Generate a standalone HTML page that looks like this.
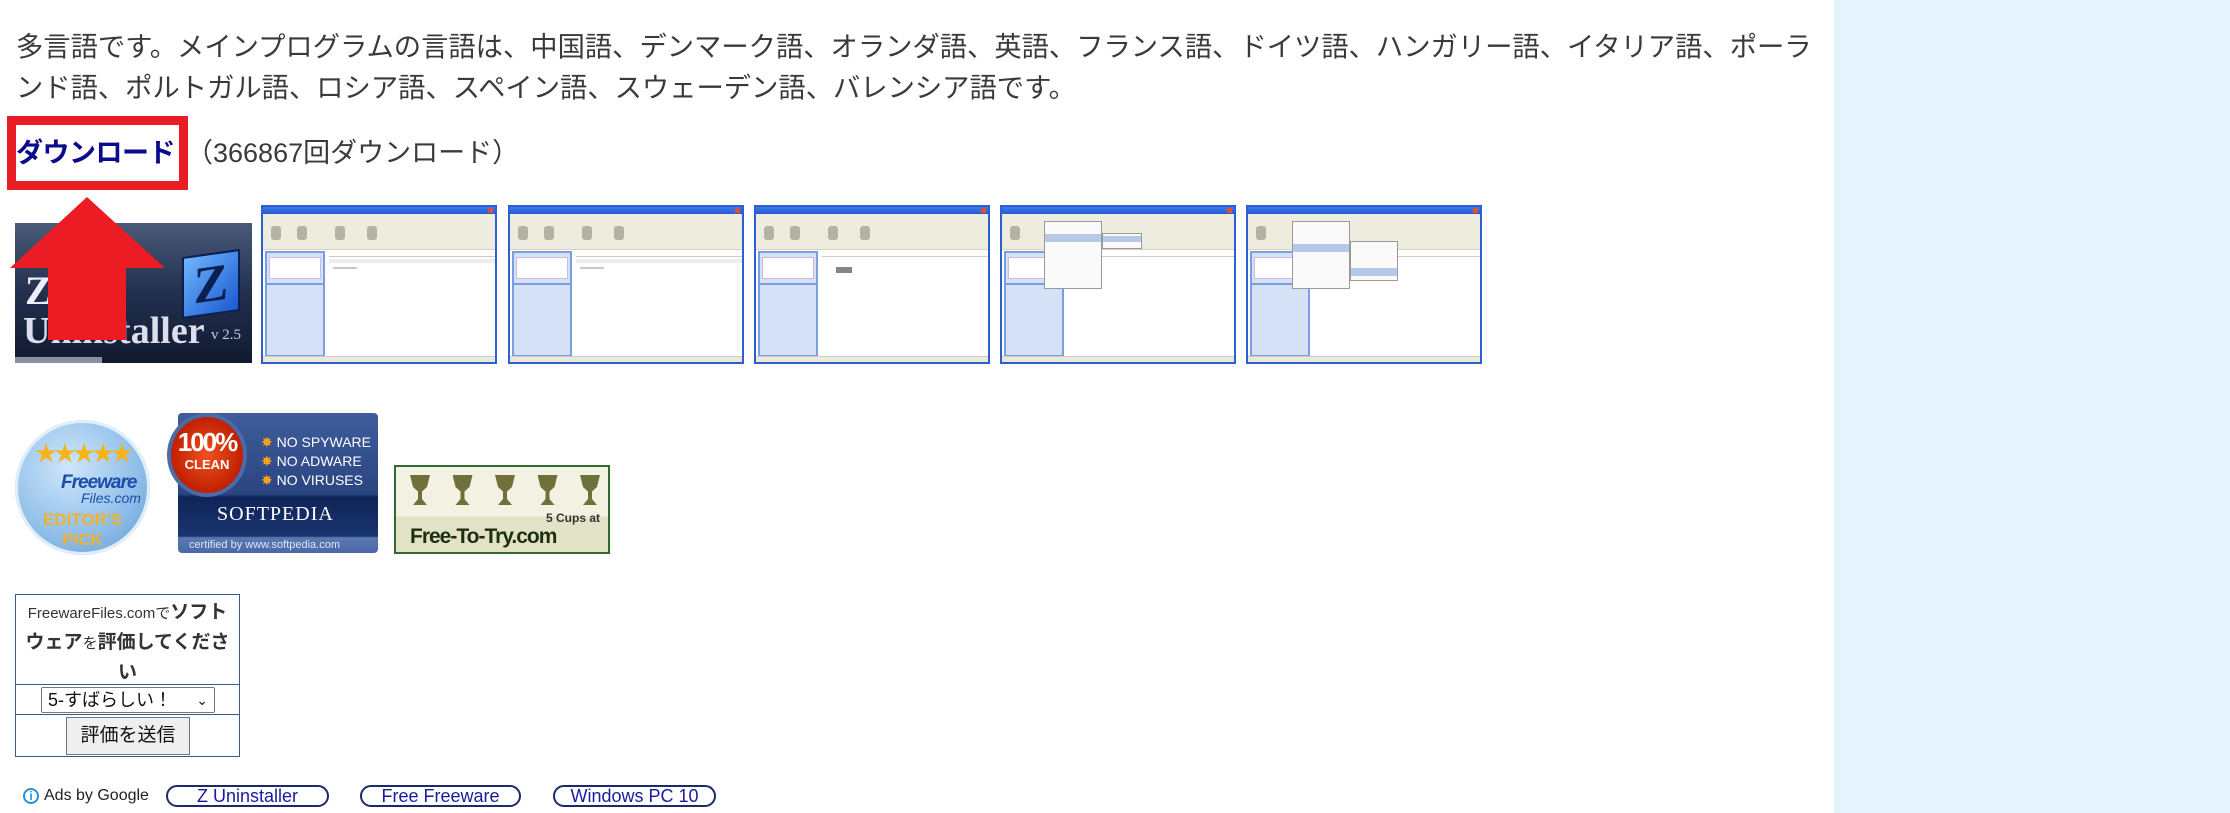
<!DOCTYPE html>
<html><head><meta charset="utf-8">
<style>
*{margin:0;padding:0;box-sizing:border-box}
body{width:2230px;height:813px;background:#fff;position:relative;overflow:hidden;font-family:"Liberation Sans","Noto Sans CJK JP",sans-serif;color:#333}
.abs{position:absolute}
#side{left:1834px;top:0;width:396px;height:813px;background:#e5f3fc}
.p{left:16px;font-size:27.3px;line-height:41px;color:#3a3a3a;white-space:nowrap}
.th{position:absolute;top:205px;width:236px;height:159px;border:2px solid #2b5fd3;background:#fff;overflow:hidden}
.th .tb{position:absolute;left:0;top:0;right:0;height:7px;background:linear-gradient(#3d7ae8,#245ad4)}
.th .tb i{position:absolute;right:2px;top:1px;width:5px;height:5px;background:#e05030}
.th .mn{position:absolute;left:0;top:7px;right:0;height:36px;background:#eeecdf;border-bottom:1px solid #d8d2b8}
.th .mn b{position:absolute;top:12px;width:10px;height:14px;background:#9a9a8a;border-radius:3px;opacity:.7}
.th .lp{position:absolute;left:2px;top:44px;width:60px;height:106px;background:#d5e1f6;border:2px solid #7a9ee0}
.th .lp .s{position:absolute;left:2px;top:4px;width:52px;height:22px;background:#fff;border:1px solid #cbd}
.th .lp .sep{position:absolute;left:0;top:30px;right:0;height:2px;background:#7a9ee0}
.th .tabs{position:absolute;left:66px;top:45px;width:166px;height:5px;border-bottom:1px solid #ccc}
.th .hd{position:absolute;left:66px;top:52px;width:166px;height:4px;background:#eee}
.th .st{position:absolute;left:0;right:0;bottom:0;height:6px;background:#ece9d8;border-top:1px solid #ccc}
.th .ln{position:absolute;height:2px;background:#9aa;opacity:.6}
.pill{position:absolute;top:785px;height:22px;border:2px solid #1a2a6a;border-radius:11px;color:#1a1aa0;font-size:18px;line-height:18px;text-align:center}
.cup{width:20px;height:30px;background:#70703a;clip-path:polygon(0 0,100% 0,85% 40%,60% 55%,60% 80%,85% 100%,15% 100%,40% 80%,40% 55%,15% 40%)}
</style></head><body>
<div id="side" class="abs"></div>

<div class="abs p" style="top:26px">多言語です。メインプログラムの言語は、中国語、デンマーク語、オランダ語、英語、フランス語、ドイツ語、ハンガリー語、イタリア語、ポーラ</div>
<div class="abs p" style="top:67px">ンド語、ポルトガル語、ロシア語、スペイン語、スウェーデン語、バレンシア語です。</div>

<div class="abs" style="left:7px;top:116px;width:181px;height:74px;border:9px solid #e91d25"></div>
<div class="abs" style="left:16px;top:135px;font-size:27px;font-weight:bold;color:#0a0a8c;line-height:36px;white-space:nowrap;letter-spacing:-0.5px">ダウンロード</div>
<div class="abs" style="left:186px;top:135px;font-size:27px;color:#3a3a3a;line-height:36px;white-space:nowrap">（366867回ダウンロード）</div>

<!-- ZS logo image -->
<div class="abs" style="left:15px;top:223px;width:237px;height:140px;background:linear-gradient(#4a5a78,#22304e 50%,#101a30);overflow:hidden">
  <div class="abs" style="left:10px;top:48px;color:#eef;font-family:'Liberation Serif',serif;font-size:40px;font-weight:bold;line-height:40px">ZS</div>
  <div class="abs" style="left:8px;top:88px;color:#dde;font-family:'Liberation Serif',serif;font-size:38px;font-weight:bold;line-height:40px">Uninstaller</div>
  <div class="abs" style="left:196px;top:104px;color:#ccd;font-family:'Liberation Serif',serif;font-size:15px">v 2.5</div>
  <div class="abs" style="left:167px;top:30px;width:58px;height:62px;background:linear-gradient(135deg,#6fb4ff,#1a5ad0);border:2px solid #0a2050;transform:skewY(-8deg);color:#0a2050;font-family:'Liberation Serif',serif;font-size:52px;font-weight:bold;text-align:center;line-height:60px">Z</div>
  <div class="abs" style="left:0;bottom:0;width:87px;height:6px;background:#8a90a0"></div>
</div>
<!-- red arrow -->
<svg class="abs" style="left:8px;top:195px" width="160" height="148"><polygon points="79,2 157,73 118,73 118,145 40,145 40,73 2,73" fill="#ec1c24"/></svg>

<!-- thumbnails -->
<div class="th" style="left:261px"><div class="tb"><i></i></div><div class="mn"><b style="left:8px"></b><b style="left:34px"></b><b style="left:72px"></b><b style="left:104px"></b></div><div class="lp"><div class="s"></div><div class="sep"></div></div><div class="tabs"></div><div class="hd"></div><div class="ln" style="left:70px;top:60px;width:24px"></div><div class="st"></div></div>
<div class="th" style="left:508px"><div class="tb"><i></i></div><div class="mn"><b style="left:8px"></b><b style="left:34px"></b><b style="left:72px"></b><b style="left:104px"></b></div><div class="lp"><div class="s"></div><div class="sep"></div></div><div class="tabs"></div><div class="hd"></div><div class="ln" style="left:70px;top:60px;width:24px"></div><div class="st"></div></div>
<div class="th" style="left:754px"><div class="tb"><i></i></div><div class="mn"><b style="left:8px"></b><b style="left:34px"></b><b style="left:72px"></b><b style="left:104px"></b></div><div class="lp"><div class="s"></div><div class="sep"></div></div><div class="tabs"></div><div class="ln" style="left:80px;top:60px;width:16px;height:6px;background:#333"></div><div class="st"></div></div>
<div class="th" style="left:1000px"><div class="tb"><i></i></div><div class="mn"><b style="left:8px"></b></div><div class="lp"><div class="s"></div><div class="sep"></div></div><div class="tabs"></div>
  <div class="abs" style="left:42px;top:14px;width:58px;height:68px;background:#fafafa;border:1px solid #999"><div class="abs" style="left:0;top:12px;width:56px;height:8px;background:#b8c8e8"></div></div>
  <div class="abs" style="left:100px;top:26px;width:40px;height:16px;background:#fafafa;border:1px solid #999"><div class="abs" style="left:0;top:2px;width:38px;height:6px;background:#b8c8e8"></div></div>
  <div class="st"></div></div>
<div class="th" style="left:1246px"><div class="tb"><i></i></div><div class="mn"><b style="left:8px"></b></div><div class="lp"><div class="s"></div><div class="sep"></div></div><div class="tabs"></div>
  <div class="abs" style="left:44px;top:14px;width:58px;height:68px;background:#fafafa;border:1px solid #999"><div class="abs" style="left:0;top:22px;width:56px;height:8px;background:#b8c8e8"></div></div>
  <div class="abs" style="left:102px;top:34px;width:48px;height:40px;background:#fafafa;border:1px solid #999"><div class="abs" style="left:0;top:26px;width:46px;height:8px;background:#b8c8e8"></div></div>
  <div class="st"></div></div>

<!-- badges -->
<div class="abs" style="left:15px;top:420px;width:135px;height:135px;border-radius:50%;background:radial-gradient(circle at 40% 35%,#cfe6fb,#8dbde8 60%,#5d95cf);box-shadow:0 0 0 3px #dfeefa inset">
  <div class="abs" style="left:20px;top:16px;color:#f5b41c;font-size:22px;letter-spacing:-3px">★★★★★</div>
  <div class="abs" style="left:46px;top:52px;color:#1a4ea8;font-size:19px;font-style:italic;font-weight:bold;letter-spacing:-1px">Freeware</div>
  <div class="abs" style="left:66px;top:70px;color:#1a4ea8;font-size:14px;font-style:italic">Files.com</div>
  <div class="abs" style="left:0;width:135px;top:90px;text-align:center;color:#f0b030;font-size:17px;font-weight:bold;line-height:20px">EDITOR'S<br>PICK</div>
</div>
<div class="abs" style="left:163px;top:405px;width:217px;height:150px">
  <div class="abs" style="left:15px;top:8px;width:200px;height:140px;background:linear-gradient(#3f5d9c,#2a4580 58%,#0f2458 60%,#1a3570 88%,#5a78b0 89%,#4a68a8);border-radius:4px"></div>
  <div class="abs" style="left:4px;top:8px;width:80px;height:84px;border-radius:50%;background:radial-gradient(#f05020,#c02000 70%);border:4px solid #4a6aa8;color:#fff;text-align:center;font-weight:bold;font-size:26px;line-height:30px;padding-top:10px;letter-spacing:-2px">100%<div style="font-size:13px;line-height:16px;letter-spacing:0">CLEAN</div></div>
  <div class="abs" style="left:98px;top:28px;color:#fff;font-size:14px;line-height:19px;white-space:nowrap"><span style="color:#f5a21c">✸</span> NO SPYWARE<br><span style="color:#f5a21c">✸</span> NO ADWARE<br><span style="color:#f5a21c">✸</span> NO VIRUSES</div>
  <div class="abs" style="left:54px;top:98px;color:#fff;font-family:'Liberation Serif',serif;font-size:20px;letter-spacing:1px">SOFTPEDIA</div>
  <div class="abs" style="left:26px;top:134px;color:#dfe6f5;font-size:11px;white-space:nowrap">certified by www.softpedia.com</div>
</div>
<div class="abs" style="left:394px;top:465px;width:216px;height:89px;border:2px solid #2f6a2f;background:linear-gradient(#f3f1e2 0 58%,#e2e3c6 58%)">
  <div class="abs" style="left:14px;top:8px;width:190px;height:32px;display:flex;justify-content:space-between">
    <span class="cup"></span><span class="cup"></span><span class="cup"></span><span class="cup"></span><span class="cup"></span>
  </div>
  <div class="abs" style="right:8px;top:44px;color:#333;font-size:12px;font-weight:bold">5 Cups at</div>
  <div class="abs" style="left:14px;top:58px;color:#1e2e10;font-size:21px;font-weight:bold;letter-spacing:-1px">Free-To-Try.com</div>
</div>

<!-- rating table -->
<div class="abs" style="left:15px;top:594px;width:225px;height:163px;border:1px solid #3a5a88">
  <div style="height:90px;border-bottom:1px solid #3a5a88;text-align:center;font-size:19px;line-height:29px;color:#333;padding-top:3px;white-space:nowrap"><span style="font-size:15px">FreewareFiles.comで</span><b>ソフト<br>ウェア</b><span style="font-size:15px">を</span><b>評価してくださ<br>い</b></div>
  <div style="height:30px;border-bottom:1px solid #3a5a88;position:relative"><div class="abs" style="left:25px;top:2px;width:174px;height:26px;border:1px solid #777;border-radius:2px;font-size:18px;line-height:24px;padding-left:6px;color:#111">5-すばらしい！<span style="position:absolute;right:6px;top:0;font-size:14px">⌄</span></div></div>
  <div style="position:relative"><div class="abs" style="left:50px;top:2px;width:124px;height:38px;border:1px solid #777;background:#efefef;font-size:19px;line-height:36px;text-align:center;color:#111">評価を送信</div></div>
</div>

<!-- ads -->
<div class="abs" style="left:23px;top:788px;width:16px;height:16px;border:2px solid #2a8fd8;border-radius:50%;color:#2a8fd8;font-size:12px;font-weight:bold;line-height:12px;text-align:center">i</div>
<div class="abs" style="left:44px;top:787px;font-size:16px;color:#222">Ads by Google</div>
<div class="pill" style="left:166px;width:163px">Z Uninstaller</div>
<div class="pill" style="left:360px;width:161px">Free Freeware</div>
<div class="pill" style="left:553px;width:163px">Windows PC 10</div>
</body></html>
